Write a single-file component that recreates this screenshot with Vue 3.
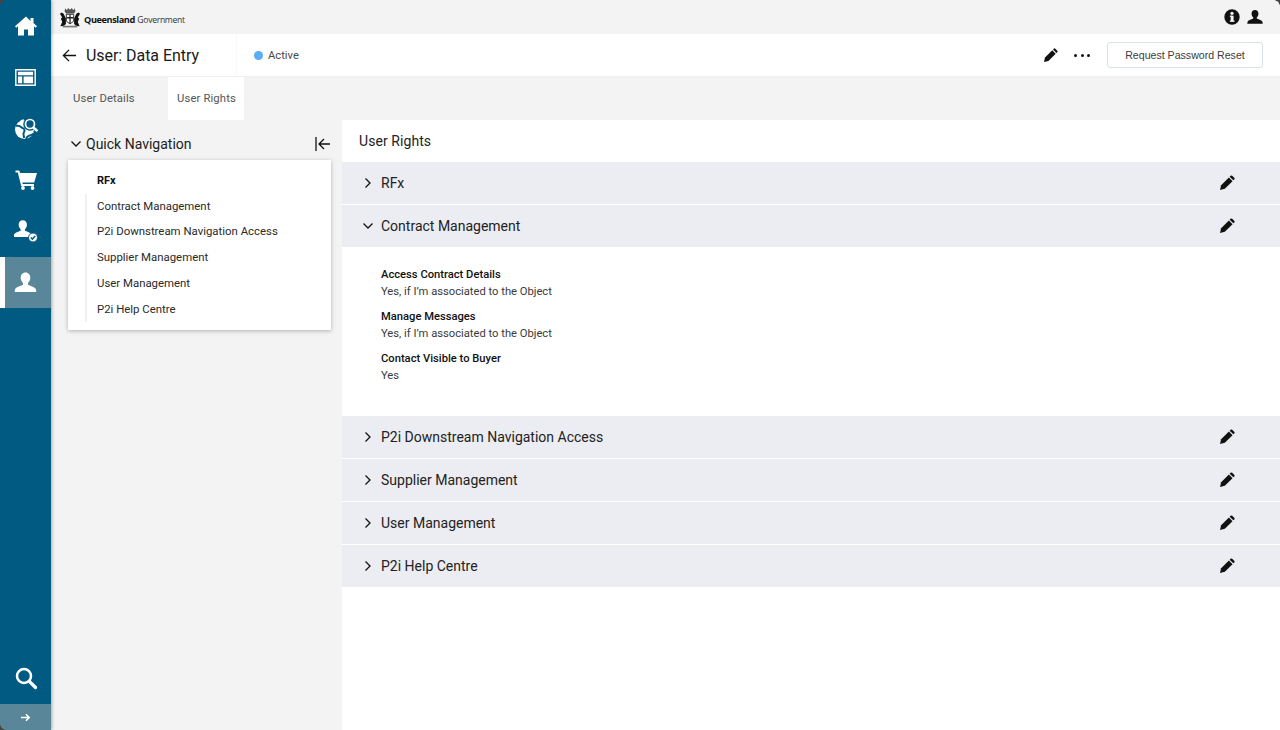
<script setup>
const navItems = ['RFx', 'Contract Management', 'P2i Downstream Navigation Access', 'Supplier Management', 'User Management', 'P2i Help Centre']
const sections = [
  { title: 'RFx', open: false },
  {
    title: 'Contract Management',
    open: true,
    rights: [
      { label: 'Access Contract Details', value: 'Yes, if I’m associated to the Object' },
      { label: 'Manage Messages', value: 'Yes, if I’m associated to the Object' },
      { label: 'Contact Visible to Buyer', value: 'Yes' }
    ]
  },
  { title: 'P2i Downstream Navigation Access', open: false },
  { title: 'Supplier Management', open: false },
  { title: 'User Management', open: false },
  { title: 'P2i Help Centre', open: false }
]
const pencilBody = 'M1.500 22.500 3.200 15.300 14.800 3.700 20.300 9.200 8.700 20.800z'
const pencilCap = 'M16 2.500 17.300 1.200a1.800 1.800 0 0 1 2.500 0L22.800 4.200a1.800 1.800 0 0 1 0 2.500L21.500 8z'
const person = 'M12 2.500c-2.900 0-4.600 2.200-4.600 5 0 2 .9 3.800 2.200 4.900v1.700c-2.700 1-7.100 2.500-7.600 4.400-.2.8-.3 1.700-.3 2.500h20.600c0-.8-.1-1.700-.3-2.500-.5-1.900-4.900-3.400-7.600-4.400v-1.700c1.300-1.100 2.200-2.900 2.200-4.900 0-2.800-1.700-5-4.600-5z'
</script>

<template>
  <div class="app">
    <aside class="rail">
      <div class="rail-item">
        <svg viewBox="0 0 24 24" width="24" height="24"><path fill="#fff" d="M12 2.500 1 12.200l1.300 1.500L4 12.300V21.500h6v-6h4v6h6v-9.200l1.700 1.400 1.300-1.500-3.500-3.100V4h-3v3.100z"/></svg>
      </div>
      <div class="rail-item">
        <svg viewBox="0 0 22 18" width="21" height="17"><path fill="#fff" fill-rule="evenodd" d="M0 0h22v18H0zM1.500 1.500v15h19v-15zM3 3h16v3.500H3zM3 8h4.500v7H3zM9 8h10v7H9z"/></svg>
      </div>
      <div class="rail-item">
        <svg viewBox="0 0 24 24" width="24" height="24">
          <circle cx="10.500" cy="13.500" r="9.500" fill="#fff"/>
          <circle cx="16" cy="8" r="6.800" fill="#005a82"/>
          <path fill="none" stroke="#005a82" stroke-width="2" d="M1.500 9.500c2.500.5 4 0 5.500 1.500s3 1 3.500 3-1.500 2.500-1 4.500.5 2 .5 3.500M12 23c.5-1.500 2-3 3.500-3.500s3-.5 4-2"/>
          <path fill="#fff" d="M6.500 4.500 9.500 3c.5 1-.5 2.500-1 3.500S6.500 7.500 6 6.500z"/>
          <circle cx="16" cy="8" r="4.500" fill="none" stroke="#fff" stroke-width="1.700"/>
          <path stroke="#fff" stroke-width="2.400" stroke-linecap="round" d="m19.500 11.500 3.200 3"/>
        </svg>
      </div>
      <div class="rail-item">
        <svg viewBox="0 0 24 24" width="24" height="24"><path fill="#fff" d="M1.500 2.500h3.700l1 2.500H23l-2.800 9.500H8.300l.4 1.500H20v2H7.200L3.800 4.500H1.500z"/><circle cx="9" cy="20" r="1.900" fill="#fff"/><circle cx="18.500" cy="20" r="1.900" fill="#fff"/></svg>
      </div>
      <div class="rail-item">
        <svg viewBox="0 0 24 24" width="24" height="24"><path fill="#fff" :d="person" transform="translate(-2 -1) scale(.9)"/><circle cx="19" cy="18.500" r="4.500" fill="#fff" stroke="#005a82" stroke-width="1"/><path d="m16.800 18.500 1.600 1.600 2.800-3" fill="none" stroke="#005a82" stroke-width="1.500"/></svg>
      </div>
      <div class="rail-item active">
        <svg viewBox="0 0 24 24" width="25" height="25"><path fill="#fff" :d="person"/></svg>
      </div>
      <div class="rail-spacer"></div>
      <div class="rail-item search">
        <svg viewBox="0 0 24 24" width="24" height="24"><circle cx="10" cy="10" r="7" fill="none" stroke="#fff" stroke-width="2.500"/><path stroke="#fff" stroke-width="3.200" stroke-linecap="round" d="m15.500 15.500 6 6"/></svg>
      </div>
      <div class="rail-toggle">
        <svg viewBox="0 0 12 12" width="11" height="11"><path fill="none" stroke="#fff" stroke-width="1.700" d="M1 6h9M6.500 2.500 10 6 6.500 9.500"/></svg>
      </div>
    </aside>

    <div class="main">
      <div class="topbar">
        <div class="brand">
          <svg class="crest" viewBox="0 0 24 24" width="22" height="23">
            <path fill="#555" d="M7 2l1.500 2L10 1.500 12 3.500 14 1.500 15.500 4 17 2l1 3-1.500 2.500h-9L6 5z"/>
            <path fill="#111" d="M1 8l2-1.500 2 1.500 1.500 3 1 2v6l-2 2-4 .5L3.500 17 2 13l1.500-1zM23 8l-2-1.500-2 1.500-1.500 3-1 2v6l2 2 4 .5-2-4.500 1.500-4-1.500-1z"/>
            <path fill="#fff" stroke="#222" stroke-width="1" d="M8 8.500h8v7.500l-4 3-4-3z"/>
            <path fill="#222" d="M11.300 9h1.400v9h-1.400zM8.500 11.500h7V13h-7z"/>
            <path fill="#777" d="M4 21h16v1.800H4z"/>
          </svg>
          <span class="brand-text"><span class="brand-bold">Queensland</span><span class="brand-light">Government</span></span>
        </div>
        <div class="top-icons">
          <svg viewBox="0 0 24 24" width="16" height="16"><circle cx="12" cy="12" r="11.500" fill="#111"/><rect x="10" y="10" width="4.400" height="9" fill="#f3f3f3"/><rect x="8.800" y="10" width="3" height="1.800" fill="#f3f3f3"/><rect x="8.800" y="17.400" width="7" height="1.800" fill="#f3f3f3"/><circle cx="12" cy="6.500" r="2.400" fill="#f3f3f3"/></svg>
          <svg viewBox="0 0 24 24" width="18" height="18"><path fill="#111" :d="person"/></svg>
        </div>
      </div>

      <header class="titlebar">
        <div class="title-left">
          <svg class="back" viewBox="0 0 16 16" width="15" height="15"><path fill="none" stroke="#111" stroke-width="1.400" d="M15 8H1.500M7.500 2 1.500 8l6 6"/></svg>
          <h1>User: Data Entry</h1>
        </div>
        <div class="status"><span class="dot"></span>Active</div>
        <div class="title-actions">
          <svg viewBox="0 0 24 24" width="15" height="15"><path fill="#111" :d="pencilBody"/><path fill="#111" :d="pencilCap"/></svg>
          <div class="more"><i></i><i></i><i></i></div>
          <button class="reset">Request Password Reset</button>
        </div>
      </header>

      <nav class="tabs">
        <div class="tab first">User Details</div>
        <div class="tab current">User Rights</div>
      </nav>

      <div class="content">
        <section class="quick">
          <div class="quick-head">
            <svg viewBox="0 0 12 12" width="12" height="12"><path fill="none" stroke="#111" stroke-width="1.300" d="M1.500 3.500 6 8l4.500-4.500"/></svg>
            <span class="quick-title">Quick Navigation</span>
            <svg class="collapse" viewBox="0 0 16 16" width="16" height="16"><path fill="none" stroke="#111" stroke-width="1.300" d="M1 1v14M15 8H4M9 3 4 8l5 5"/></svg>
          </div>
          <div class="quick-card">
            <div class="nav-first">{{ navItems[0] }}</div>
            <ul>
              <li v-for="item in navItems.slice(1)" :key="item">{{ item }}</li>
            </ul>
          </div>
        </section>

        <section class="rights">
          <h2>User Rights</h2>
          <div v-for="s in sections" :key="s.title" class="section">
            <div class="section-head">
              <svg class="chev" viewBox="0 0 12 12" width="12" height="12">
                <path v-if="s.open" fill="none" stroke="#111" stroke-width="1.300" d="M1.500 3.500 6 8l4.500-4.500"/>
                <path v-else fill="none" stroke="#111" stroke-width="1.300" d="M3.500 1.500 8 6l-4.500 4.500"/>
              </svg>
              <span class="section-title">{{ s.title }}</span>
              <svg class="edit" viewBox="0 0 24 24" width="16" height="16"><path fill="#111" :d="pencilBody"/><path fill="#111" :d="pencilCap"/></svg>
            </div>
            <div v-if="s.open" class="section-body">
              <div v-for="r in s.rights" :key="r.label" class="right">
                <div class="right-label">{{ r.label }}</div>
                <div class="right-value">{{ r.value }}</div>
              </div>
            </div>
          </div>
        </section>
      </div>
    </div>

    <span class="corner tl"></span>
    <span class="corner tr"></span>
    <span class="corner bl"></span>
  </div>
</template>

<style>
html, body { margin: 0; background: #f3f3f3; }
</style>

<style scoped>
.app {
  position: relative;
  display: flex;
  width: 1280px;
  height: 730px;
  overflow: hidden;
  font-family: Roboto, "Liberation Sans", sans-serif;
  color: #1c1c1c;
  background: #f3f3f3;
}
.rail {
  width: 51px;
  flex: none;
  background: #005a82;
  display: flex;
  flex-direction: column;
  box-shadow: 1px 0 3px rgba(0, 0, 0, .3);
  z-index: 2;
}
.rail-item {
  height: 51.400px;
  display: flex;
  align-items: center;
  justify-content: center;
  flex: none;
  box-sizing: border-box;
}
.rail-item.active {
  background: #5a8699;
  border-left: 5px solid #fff;
  padding-right: 5px;
}
.rail-spacer { flex: 1; }
.rail-item.search { height: 53px; }
.rail-toggle {
  height: 26px;
  background: #5a8699;
  display: flex;
  align-items: center;
  justify-content: center;
}
.main { flex: 1; display: flex; flex-direction: column; min-width: 0; }
.topbar {
  height: 34px;
  display: flex;
  align-items: center;
  justify-content: space-between;
  padding: 0 16px 0 8px;
  flex: none;
}
.brand { display: flex; align-items: center; }
.crest { margin-right: 3px; }
.brand-text { padding-top: 1px; }
.brand-bold { font: 700 9.200px "Open Sans", sans-serif; letter-spacing: -.42px; color: #111; }
.brand-light { font: 400 8.600px "Open Sans", sans-serif; letter-spacing: -.3px; color: #333; margin-left: 2.500px; }
.top-icons { display: flex; align-items: center; gap: 6px; }
.titlebar {
  height: 43px;
  flex: none;
  background: #fff;
  display: flex;
  align-items: center;
  border-bottom: 1px solid #f0f0f0;
  box-sizing: border-box;
}
.title-left {
  width: 186px;
  height: 100%;
  box-sizing: border-box;
  display: flex;
  align-items: center;
  padding-left: 11px;
  border-right: 1px solid #f8f8f8;
}
.back { margin-right: 9px; }
h1 { margin: 0; font-size: 16px; font-weight: 400; letter-spacing: -.05px; color: #1a1a1a; white-space: nowrap; }
.status {
  display: flex;
  align-items: center;
  margin-left: 17px;
  font-size: 11.200px;
  color: #4a4a4a;
}
.dot { width: 9px; height: 9px; border-radius: 50%; background: #5aaef5; margin-right: 5px; }
.title-actions {
  margin-left: auto;
  display: flex;
  align-items: center;
  padding-right: 17px;
}
.more { display: flex; gap: 3.500px; margin: 0 17px 0 16px; }
.more i { width: 3px; height: 3px; background: #111; border-radius: 50%; }
.reset {
  width: 156px;
  height: 26px;
  box-sizing: border-box;
  background: #fff;
  border: 1px solid #d8e0ea;
  border-radius: 3px;
  font: 400 10.600px "Liberation Sans", Arial, sans-serif;
  color: #3c3c3c;
  padding: 0;
}
.tabs { height: 43px; flex: none; display: flex; font-size: 11.300px; color: #555; }
.tab { display: flex; align-items: center; height: 100%; letter-spacing: .12px; box-sizing: border-box; }
.tab.first { margin-left: 22px; width: 95px; }
.tab.current { background: #fff; width: 76px; padding-left: 9px; }
.content { flex: 1; display: flex; min-height: 0; }
.quick { width: 291px; flex: none; box-sizing: border-box; padding: 0 11px 0 17px; }
.quick-head { display: flex; align-items: center; height: 40px; padding: 7px 0 0 2px; box-sizing: border-box; }
.quick-title { font-size: 14px; letter-spacing: 0; margin-left: 4px; color: #1c1c1c; }
.collapse { margin-left: auto; margin-right: 0; }
.quick-card {
  background: #fff;
  box-shadow: 0 1px 4px rgba(0, 0, 0, .28);
  padding: 8px 0 9px 19px;
  width: 263px;
  box-sizing: border-box;
  height: 170px;
}
.nav-first {
  font-size: 11px;
  font-weight: 700;
  line-height: 25.700px;
  padding-left: 10px;
  color: #111;
}
ul { list-style: none; margin: 0; padding: 0 0 0 10px; border-left: 2px solid #f0f0f0; position: relative; left: -2px; }
li { font-size: 11.400px; line-height: 25.700px; color: #2a2a2a; white-space: nowrap; }
.rights { flex: 1; background: #fff; min-width: 0; }
h2 { margin: 0; height: 42px; line-height: 42px; padding-left: 17px; font-size: 14px; font-weight: 400; letter-spacing: .07px; color: #222; }
.section-head {
  height: 42px;
  margin-bottom: 1px;
  background: #ecedf2;
  display: flex;
  align-items: center;
  padding-left: 20px;
}
.section-title { font-size: 14px; margin-left: 7px; color: #222; }
.edit { margin-left: auto; margin-right: 45px; }
.section-body { padding: 19px 0 32px 39px; height: 168px; box-sizing: border-box; margin-top: -1px; margin-bottom: 1px; }
.right { height: 42px; font-size: 11.200px; line-height: 17px; }
.right-label { font-weight: 500; color: #111; }
.right-value { color: #3a3a3a; }
.corner { position: absolute; width: 6px; height: 6px; z-index: 3; }
.tl { left: 0; top: 0; background: radial-gradient(circle at 100% 100%, transparent 5.500px, #444 6px); }
.tr { right: 0; top: 0; background: radial-gradient(circle at 0 100%, transparent 5.500px, #444 6px); }
.bl { left: 0; bottom: 0; background: radial-gradient(circle at 100% 0, transparent 5.500px, #444 6px); }
</style>
